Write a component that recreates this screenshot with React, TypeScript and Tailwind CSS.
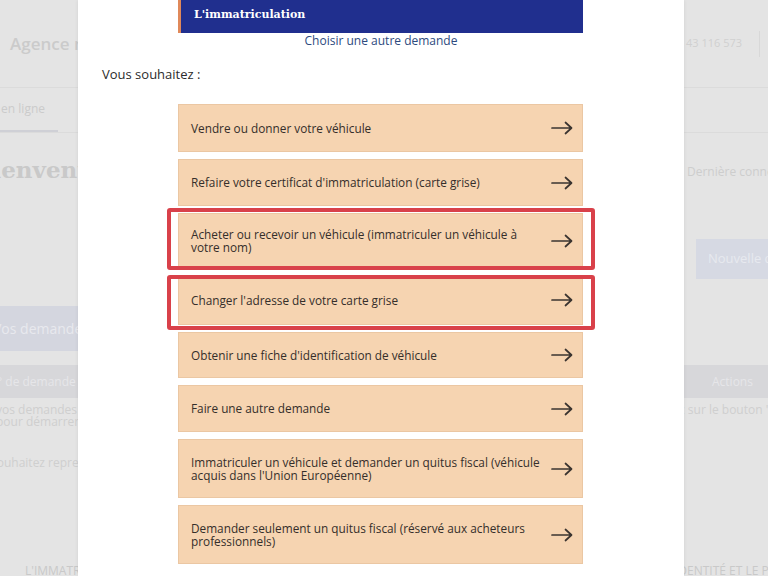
const choices = [
  { lines: ["Vendre ou donner votre véhicule"], h: "h-[48px]" },
  { lines: ["Refaire votre certificat d'immatriculation (carte grise)"], h: "h-[47px]" },
  { lines: ["Acheter ou recevoir un véhicule (immatriculer un véhicule à", "votre nom)"], h: "h-[55px]" },
  { lines: ["Changer l'adresse de votre carte grise"], h: "h-[50px]" },
  { lines: ["Obtenir une fiche d'identification de véhicule"], h: "h-[46px]" },
  { lines: ["Faire une autre demande"], h: "h-[47px]" },
  { lines: ["Immatriculer un véhicule et demander un quitus fiscal (véhicule", "acquis dans l'Union Européenne)"], h: "h-[59px]" },
  { lines: ["Demander seulement un quitus fiscal (réservé aux acheteurs", "professionnels)"], h: "h-[59px]" },
];

function Arrow() {
  return (
    <svg width="22" height="14" viewBox="0 0 22 14" fill="none" className="shrink-0">
      <path d="M1 7H20.5M14.5 1.5L20.5 7L14.5 12.5" stroke="#3b3430" strokeWidth="1.7" strokeLinecap="round" strokeLinejoin="round" />
    </svg>
  );
}

function ChoiceRow({ lines, h }: { lines: string[]; h: string }) {
  return (
    <button
      className={`${h} w-full flex items-center justify-between pl-[12px] pr-[9px] bg-[#f6d4b1] border border-[#ebc7a3] text-left`}
    >
      <span className="flex flex-col text-[11.8px] leading-[13px] text-[#352e2a]">
        {lines.map((l) => (
          <span key={l} className="whitespace-nowrap">{l}</span>
        ))}
      </span>
      <Arrow />
    </button>
  );
}

function BackgroundPage() {
  return (
    <div className="h-full w-full text-[#cbcbcb]">
      {/* top bar */}
      <div className="h-[88px] flex items-center justify-between border-b border-[#dbdbdb]">
        <span className="pl-[10px] text-[17px] font-semibold whitespace-nowrap">Agence nationale des titres sécurisés</span>
        <div className="flex items-center h-full shrink-0">
          <span className="text-[11px] text-[#d0d0d0] whitespace-nowrap pr-[17px]">09 70 43 116 573</span>
          <div className="w-px h-[26px] bg-[#d8d8d8] mr-[8px]" />
        </div>
      </div>

      {/* tabs */}
      <div className="h-[45px] flex items-end border-b border-[#dbdbdb]">
        <div className="w-[58px] shrink-0 h-full flex justify-end items-center pr-[13px] border-b-2 border-[#cfd0d6] whitespace-nowrap text-[12px]">
          Mes demandes en ligne
        </div>
      </div>

      {/* welcome + side info */}
      <div className="h-[232px] flex">
        <div className="w-[684px] shrink-0 flex flex-col">
          <h1 className="-ml-[27px] mt-[20px] text-[23px] leading-[34px] font-bold text-[#c9c9c9] whitespace-nowrap font-['DejaVu_Serif',serif]">
            Bienvenue sur votre espace
          </h1>
          <div className="mt-[119px] h-[45px] w-[200px] -ml-[12px] flex items-center bg-[#d4d6df] pl-[5px]">
            <span className="text-[14px] text-[#e8e9ee] whitespace-nowrap">Vos demandes</span>
          </div>
        </div>
        <div className="flex flex-col">
          <span className="mt-[30px] pl-[3px] text-[12px] text-[#cdcdcd] whitespace-nowrap">Dernière connexion le</span>
          <div className="mt-[58px] ml-[12px] h-[40px] w-[120px] flex items-center pl-[12px] bg-[#d6d9e3] text-[13px] text-[#e7e9ef] whitespace-nowrap">
            Nouvelle demande
          </div>
        </div>
      </div>

      {/* table head */}
      <div className="h-[33px] flex items-center bg-[#d7d7da] text-[12px] text-[#e6e6e9]">
        <span className="w-[684px] shrink-0 -ml-[12px] whitespace-nowrap">N° de demande</span>
        <span className="ml-[40px] whitespace-nowrap">Actions</span>
      </div>

      {/* table body */}
      <div className="flex text-[12px] leading-[12px] text-[#cfcfcf]">
        <div className="w-[684px] shrink-0 pt-[6px] -ml-[4px]">
          <p className="whitespace-nowrap">vos demandes en cours</p>
          <p className="whitespace-nowrap">pour démarrer une demande</p>
          <p className="mt-[29px] -ml-[5px] whitespace-nowrap">souhaitez reprendre</p>
        </div>
        <div className="pt-[6px] -ml-[36px]">
          <p className="whitespace-nowrap">Cliquez sur le bouton "Nouvelle demande"</p>
        </div>
      </div>

      {/* footer links */}
      <div className="mt-[93px] flex text-[12px] uppercase text-[#c9c9c9]">
        <span className="w-[675px] shrink-0 pl-[25px] whitespace-nowrap">L'immatriculation</span>
        <span className="whitespace-nowrap">Identité et le permis</span>
      </div>
    </div>
  );
}

export default function App() {
  return (
    <div className="relative w-[768px] h-[576px] overflow-hidden bg-[#e4e4e4] font-['Open_Sans','Liberation_Sans',sans-serif]">
      <BackgroundPage />

      <div className="absolute top-0 bottom-0 left-[78px] w-[606px] bg-white shadow-[0_0_4px_rgba(0,0,0,0.08)]">
        <div className="ml-[100px] w-[405px] h-[33px] flex items-start pt-[7px] bg-[#202f8e] border-l-[3px] border-[#e0895a] pl-[13px]">
          <span className="text-[11px] leading-[16px] font-bold text-white font-['DejaVu_Serif',serif]">
            L'immatriculation
          </span>
        </div>
        <p className="mt-[1px] text-center text-[12px] leading-[14px] text-[#2d4a7e]">Choisir une autre demande</p>

        <p className="ml-[24px] mt-[18px] text-[13px] leading-[16px] text-[#2c2c2c]">Vous souhaitez :</p>

        <div className="relative ml-[100px] mt-[22px] w-[405px] flex flex-col gap-[7px]">
          {choices.map((c) => (
            <ChoiceRow key={c.lines[0]} lines={c.lines} h={c.h} />
          ))}
          <div className="absolute left-[-11px] top-[104px] w-[428px] h-[62px] rounded-[3px] border-[4px] border-[#d9414a]" />
          <div className="absolute left-[-11px] top-[171px] w-[428px] h-[55px] rounded-[3px] border-[4px] border-[#d9414a]" />
        </div>
      </div>
    </div>
  );
}
